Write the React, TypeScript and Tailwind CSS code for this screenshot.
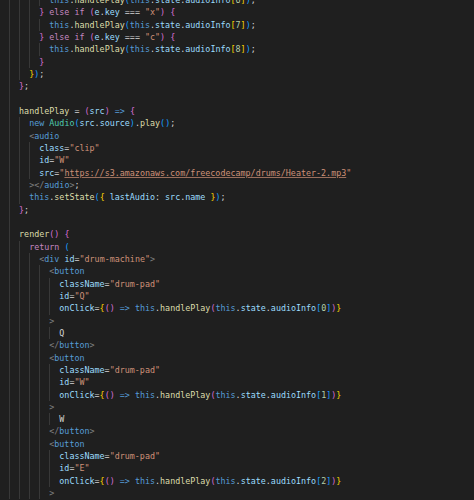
import React from "react";

type Seg = [string, string] | [string, string, boolean];

const c = {
  k: "text-[#C586C0]",
  b: "text-[#569CD6]",
  f: "text-[#DCDCAA]",
  v: "text-[#9CDCFE]",
  s: "text-[#CE9178]",
  n: "text-[#B5CEA8]",
  t: "text-[#4EC9B0]",
  w: "text-[#D4D4D4]",
  g: "text-[#808080]",
  y: "text-[#FFD700]",
  o: "text-[#DA70D6]",
  l: "text-[#179FFF]",
};

const play = (i: string, open: string, close: string, inner: string): Seg[] => [
  ["this", c.b],
  [".", c.w],
  ["handlePlay", c.f],
  ["(", open],
  ["this", c.b],
  [".", c.w],
  ["state", c.v],
  [".", c.w],
  ["audioInfo", c.v],
  ["[", inner],
  [i, c.n],
  ["]", inner],
  [")", close],
];

const elseIf = (key: string): Seg[] => [
  ["}", c.o],
  [" else if ", c.k],
  ["(", c.o],
  ["e", c.v],
  [".", c.w],
  ["key", c.v],
  [" === ", c.w],
  [`"${key}"`, c.s],
  [")", c.o],
  [" ", c.w],
  ["{", c.o],
];

const button = (id: string, idx: string): [number, Seg[]][] => [
  [8, [["<", c.g], ["button", c.b]]],
  [10, [["className", c.v], ["=", c.w], ['"drum-pad"', c.s]]],
  [10, [["id", c.v], ["=", c.w], [`"${id}"`, c.s]]],
  [
    10,
    [
      ["onClick", c.v],
      ["=", c.w],
      ["{", c.y],
      ["()", c.o],
      [" ", c.w],
      ["=>", c.b],
      [" ", c.w],
      ...play(idx, c.o, c.o, c.l),
      ["}", c.y],
    ],
  ],
  [8, [[">", c.g]]],
  [10, [[id, c.w]]],
  [8, [["</", c.g], ["button", c.b], [">", c.g]]],
];

const lines: [number, Seg[]][] = [
  [8, [...play("6", c.l, c.l, c.y), [";", c.w]]],
  [6, elseIf("x")],
  [8, [...play("7", c.l, c.l, c.y), [";", c.w]]],
  [6, elseIf("c")],
  [8, [...play("8", c.l, c.l, c.y), [";", c.w]]],
  [6, [["}", c.o]]],
  [4, [["}", c.y], [")", c.l], [";", c.w]]],
  [2, [["}", c.o], [";", c.w]]],
  [1, []],
  [
    2,
    [
      ["handlePlay", c.f],
      [" = ", c.w],
      ["(", c.o],
      ["src", c.v],
      [")", c.o],
      [" ", c.w],
      ["=>", c.b],
      [" ", c.w],
      ["{", c.o],
    ],
  ],
  [
    4,
    [
      ["new", c.b],
      [" ", c.w],
      ["Audio", c.t],
      ["(", c.l],
      ["src", c.v],
      [".", c.w],
      ["source", c.v],
      [")", c.l],
      [".", c.w],
      ["play", c.f],
      ["()", c.l],
      [";", c.w],
    ],
  ],
  [4, [["<", c.g], ["audio", c.b]]],
  [6, [["class", c.v], ["=", c.w], ['"clip"', c.s]]],
  [6, [["id", c.v], ["=", c.w], ['"W"', c.s]]],
  [
    6,
    [
      ["src", c.v],
      ["=", c.w],
      ['"', c.s],
      ["https://s3.amazonaws.com/freecodecamp/drums/Heater-2.mp3", c.s, true],
      ['"', c.s],
    ],
  ],
  [4, [[">", c.g], ["</", c.g], ["audio", c.b], [">", c.g], [";", c.w]]],
  [
    4,
    [
      ["this", c.b],
      [".", c.w],
      ["setState", c.f],
      ["(", c.l],
      ["{", c.y],
      [" lastAudio", c.v],
      [": ", c.w],
      ["src", c.v],
      [".", c.w],
      ["name", c.v],
      [" ", c.w],
      ["}", c.y],
      [")", c.l],
      [";", c.w],
    ],
  ],
  [2, [["}", c.o], [";", c.w]]],
  [1, []],
  [2, [["render", c.f], ["()", c.o], [" ", c.w], ["{", c.o]]],
  [4, [["return", c.k], [" ", c.w], ["(", c.l]]],
  [
    6,
    [
      ["<", c.g],
      ["div", c.b],
      [" ", c.w],
      ["id", c.v],
      ["=", c.w],
      ['"drum-machine"', c.s],
      [">", c.g],
    ],
  ],
  ...button("Q", "0"),
  ...button("W", "1"),
  ...button("E", "2").slice(0, 5),
];

function Line({ indent, segs }: { indent: number; segs: Seg[] }) {
  const guides = Math.ceil(indent / 2);
  return (
    <div className="flex h-[12.33px] items-center whitespace-pre leading-[12.33px]">
      {Array.from({ length: guides }).map((_, i) => (
        <span key={i} className="inline-block h-full w-[2ch] shrink-0 border-l border-[#383838]" />
      ))}
      {segs.map(([text, cls, link], i) => (
        <span key={i} className={link ? `${cls} underline decoration-[#CE9178]/70` : cls}>
          {text}
        </span>
      ))}
    </div>
  );
}

export default function App() {
  return (
    <div className="h-[500px] w-[474px] overflow-hidden bg-[#1f1f1f] font-['DejaVu_Sans_Mono',monospace] text-[8.37px] text-[#D4D4D4] antialiased">
      <div className="mt-[-6px] pl-[9px]">
        {lines.map(([indent, segs], i) => (
          <Line key={i} indent={indent} segs={segs} />
        ))}
      </div>
    </div>
  );
}
